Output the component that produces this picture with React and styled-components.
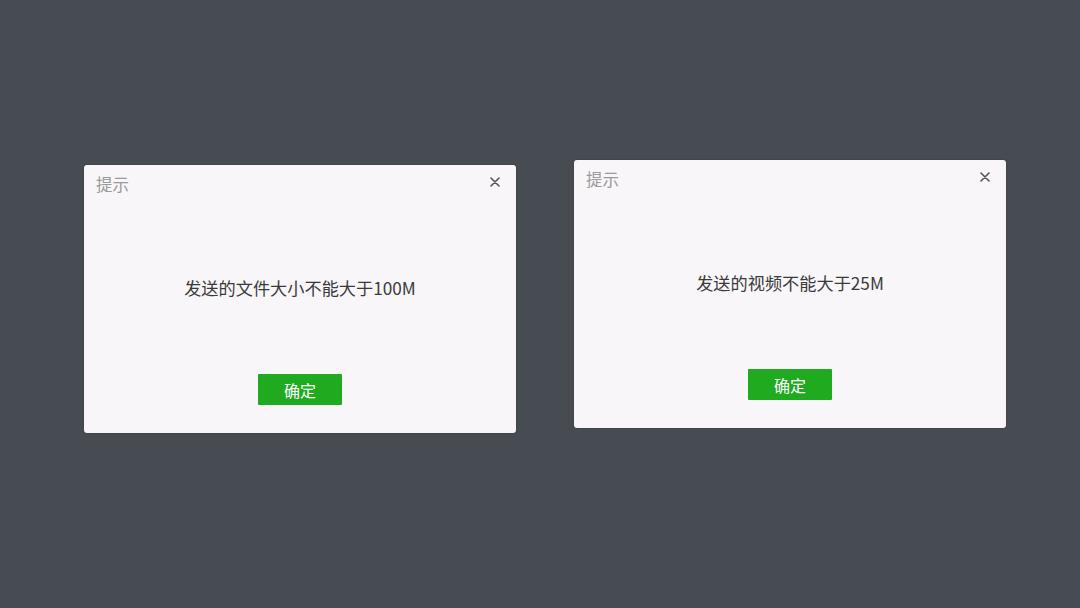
import React from "react";
import styled, { createGlobalStyle } from "styled-components";

const Global = createGlobalStyle`
  html, body { margin: 0; padding: 0; }
  body {
    background: #474c52;
    font-family: "Noto Sans CJK SC", "Microsoft YaHei", "Liberation Sans", sans-serif;
  }
`;

const Stage = styled.div`
  width: 1080px;
  height: 608px;
  box-sizing: border-box;
  padding: 160px 0 0 84px;
  display: flex;
  align-items: flex-start;
  gap: 58px;
`;

const Dialog = styled.div`
  width: 432px;
  height: 268px;
  margin-top: ${(p) => p.$offset || 0}px;
  background: #f8f6f8;
  border-radius: 3px;
  box-shadow: 0 0 2px rgba(0, 0, 0, 0.25);
  display: flex;
  flex-direction: column;
  box-sizing: border-box;
`;

const Header = styled.div`
  height: 38px;
  padding: 0 14px 0 12px;
  display: flex;
  align-items: center;
  justify-content: space-between;
`;

const Title = styled.div`
  font-size: 16.5px;
  color: #9a9a9a;
  line-height: 1;
  margin-top: 0;
`;

const Close = styled.button`
  border: 0;
  background: transparent;
  padding: 0;
  width: 14px;
  height: 14px;
  display: flex;
  align-items: center;
  justify-content: center;
  margin-top: -4px;
  cursor: pointer;
`;

const Body = styled.div`
  flex: 1;
  display: flex;
  flex-direction: column;
  align-items: center;
`;

const Message = styled.div`
  margin-top: 73px;
  font-size: 17.2px;
  color: #3a3a3a;
  line-height: 24px;
`;

const Confirm = styled.button`
  margin-top: 74px;
  width: 84px;
  height: 31px;
  border: 0;
  border-radius: 1px;
  background: #1faa1f;
  color: #fff;
  font-family: inherit;
  font-size: 16px;
  cursor: pointer;
`;

function CloseIcon() {
  return (
    <svg width="10" height="10" viewBox="0 0 10 10">
      <path d="M1 1 L9 9 M9 1 L1 9" stroke="#555" strokeWidth="1.6" strokeLinecap="round" />
    </svg>
  );
}

function Alert({ message, offset }) {
  return (
    <Dialog $offset={offset}>
      <Header>
        <Title>提示</Title>
        <Close aria-label="关闭">
          <CloseIcon />
        </Close>
      </Header>
      <Body>
        <Message>{message}</Message>
        <Confirm>确定</Confirm>
      </Body>
    </Dialog>
  );
}

export default function App() {
  return (
    <>
      <Global />
      <Stage>
        <Alert message="发送的文件大小不能大于100M" offset={5} />
        <Alert message="发送的视频不能大于25M" offset={0} />
      </Stage>
    </>
  );
}
